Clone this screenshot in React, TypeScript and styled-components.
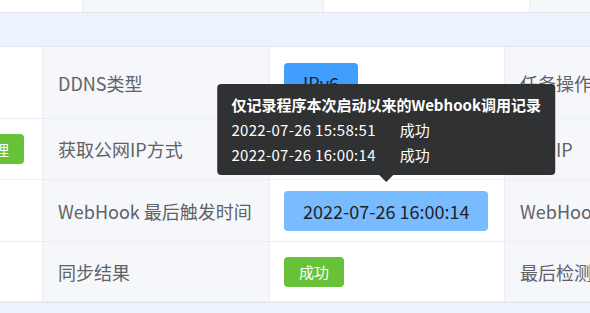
import styled, { createGlobalStyle } from "styled-components"

const Global = createGlobalStyle`
body {
  margin: 0;
  background: #fff;
  overflow: hidden;
  font-family: "Noto Sans CJK SC", "Noto Sans", sans-serif;
}
`

const App = () => {
  return (
    <Page>
      <Global />
      <TopStrip>
        <StripCell />
        <StripCell $grey />
        <StripCell />
        <StripCell $grey />
      </TopStrip>
      <Band />
      <Row $h={72}>
        <Cell />
        <Label>DDNS类型</Label>
        <Value>
          <Btn $kind="primary">IPv6</Btn>
        </Value>
        <Label>任务操作</Label>
      </Row>
      <Row $h={61}>
        <Cell $end>
          <Btn $kind="success">管理</Btn>
        </Cell>
        <Label>获取公网IP方式</Label>
        <Value>
          <Btn $kind="primary">网卡</Btn>
        </Value>
        <Label>当前IP</Label>
      </Row>
      <Row $h={62}>
        <Cell />
        <Label>WebHook 最后触发时间</Label>
        <Value>
          <Anchor>
            <Btn $kind="light">2022-07-26 16:00:14</Btn>
            <Tip>
              <TipTitle>仅记录程序本次启动以来的Webhook调用记录</TipTitle>
              <TipLine>
                <TipDate>2022-07-26 15:58:51</TipDate>
                <span>成功</span>
              </TipLine>
              <TipLine>
                <TipDate>2022-07-26 16:00:14</TipDate>
                <span>成功</span>
              </TipLine>
            </Tip>
          </Anchor>
        </Value>
        <Label>WebHook 最后触发结果</Label>
      </Row>
      <Row $h={60}>
        <Cell />
        <Label>同步结果</Label>
        <Value>
          <Btn $kind="success">成功</Btn>
        </Value>
        <Label>最后检测时间</Label>
      </Row>
      <Band $bottom />
    </Page>
  )
}

export default App

const Page = styled.div`
width: 590px;
height: 313px;
overflow: hidden;
`
const TopStrip = styled.div`
display: grid;
grid-template-columns: 83px 241px 206px 220px;
height: 12px;
border-bottom: 1px solid #e4e7ed;
`
const StripCell = styled.div<{ $grey?: boolean }>`
background: ${p => (p.$grey ? "#f5f7fa" : "#fff")};
border-right: 1px solid #ebeef5;
`
const Band = styled.div<{ $bottom?: boolean }>`
height: ${p => (p.$bottom ? "20px" : "33px")};
background: #ecf3fe;
border-bottom: ${p => (p.$bottom ? "none" : "1px solid #e4e7ed")};
border-top: ${p => (p.$bottom ? "1px solid #e4e7ed" : "none")};
`
const Row = styled.div<{ $h: number }>`
display: grid;
grid-template-columns: 43px 227px 235px 220px;
height: ${p => p.$h}px;
box-sizing: border-box;
border-bottom: 1px solid #ebeef5;
`
const Cell = styled.div<{ $end?: boolean }>`
display: flex;
align-items: center;
justify-content: ${p => (p.$end ? "flex-end" : "flex-start")};
padding-right: ${p => (p.$end ? "18px" : "0")};
border-right: 1px solid #ebeef5;
overflow: hidden;
`
const Label = styled.div`
display: flex;
align-items: center;
padding: 0 15px;
background: #f5f7fa;
color: #606266;
font-size: 18px;
white-space: nowrap;
overflow: hidden;
border-right: 1px solid #ebeef5;
`
const Value = styled.div`
display: flex;
align-items: center;
padding: 0 14px;
border-right: 1px solid #ebeef5;
`
const Btn = styled.div<{ $kind: "primary" | "light" | "success" }>`
flex-shrink: 0;
display: inline-flex;
align-items: center;
justify-content: center;
box-sizing: border-box;
border-radius: 4px;
white-space: nowrap;
height: ${p => (p.$kind === "success" ? "30px" : "40px")};
padding: ${p => (p.$kind === "success" ? "0 15px" : "0 19px")};
font-size: ${p => (p.$kind === "success" ? "15px" : "18px")};
color: ${p => (p.$kind === "success" ? "#fff" : "#222")};
background: ${p =>
  p.$kind === "primary" ? "#409eff" : p.$kind === "light" ? "#79bbff" : "#67c23a"};
`
const Anchor = styled.div`
position: relative;
display: inline-flex;
`
const Tip = styled.div`
position: absolute;
bottom: calc(100% + 16px);
left: 50%;
transform: translateX(-50%);
z-index: 10;
background: #303133;
color: #fff;
border-radius: 4px;
padding: 8px 14px;
font-size: 15px;
line-height: 25px;
white-space: nowrap;
&::after {
  content: "";
  position: absolute;
  top: 100%;
  left: 50%;
  margin-left: -7px;
  border: 7px solid transparent;
  border-top-color: #303133;
}
`
const TipTitle = styled.div`
font-weight: bold;
`
const TipLine = styled.div`
display: flex;
gap: 24px;
`
const TipDate = styled.span`
letter-spacing: 0.3px;
`
